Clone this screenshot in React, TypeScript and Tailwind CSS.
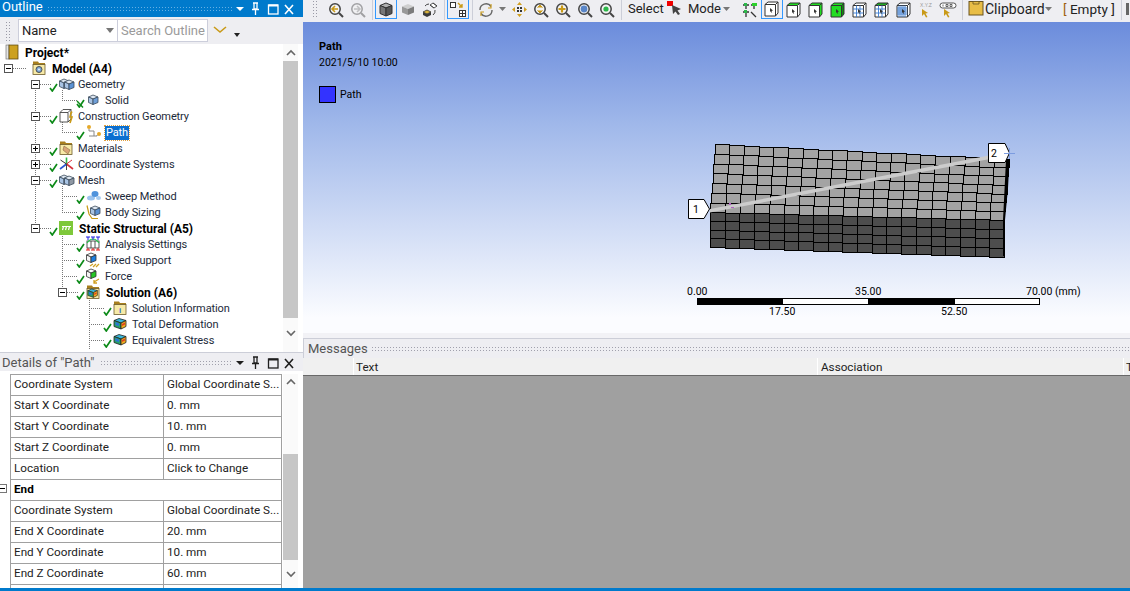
import React from "react";

const FONT = "font-['Roboto','Liberation_Sans',Arial,sans-serif]";

function Svg({ s = 16, children }: { s?: number; children: React.ReactNode }) {
  return (
    <svg width={s} height={s} viewBox={`0 0 ${s} ${s}`} className="block shrink-0">
      {children}
    </svg>
  );
}

// ---- tree icons ----
function Cube({ x = 0, y = 0, c = "#6f9fd8" }: { x?: number; y?: number; c?: string }) {
  return (
    <g transform={`translate(${x} ${y})`} stroke="#3a4a5a" strokeWidth="0.8" strokeLinejoin="round">
      <path d="M5 1 L10 3 L5 5 L0.5 3 Z" fill="#dfe8f2" />
      <path d="M0.5 3 L5 5 V10.5 L0.5 8.5 Z" fill="#a9c4e4" />
      <path d="M5 5 L10 3 V8.5 L5 10.5 Z" fill={c} />
    </g>
  );
}

function Folder({ children }: { children?: React.ReactNode }) {
  return (
    <>
      <path d="M1 1.5 H6 L7 3 H13 V5 H1 Z" fill="#a87f1e" />
      <rect x="1" y="4.5" width="12" height="10" fill="#f7eaa8" stroke="#6b5a2a" strokeWidth="0.8" />
      {children}
    </>
  );
}

function Rainbow() {
  return (
    <g transform="translate(0 2)" stroke="#222" strokeWidth="0.8">
      <path d="M6 0.5 L13 2.5 L8 5 L1 2.5 Z" fill="#39b7d8" />
      <path d="M1 2.5 L8 5 V11 L1 8.5 Z" fill="#27a06a" />
      <path d="M8 5 L13 2.5 V8.5 L8 11 Z" fill="#f0b020" />
      <path d="M2.5 4 L6 5.5 V8 L2.5 7 Z" fill="#2c72d8" stroke="none" />
      <path d="M9 6 L12 4.5 V6.5 L9 8 Z" fill="#e04020" stroke="none" />
    </g>
  );
}

const treeIcons: Record<string, React.ReactNode> = {
  project: (
    <>
      <rect x="1" y="1" width="3" height="14" fill="#e4e4e4" stroke="#777" strokeWidth="0.7" />
      <rect x="4" y="1" width="9" height="14" fill="#cda11f" stroke="#5c4a14" strokeWidth="0.8" />
    </>
  ),
  model: (
    <Folder>
      <circle cx="7" cy="9.5" r="3" fill="#7aa6d6" stroke="#444" strokeWidth="0.9" />
      <circle cx="7" cy="9.5" r="1" fill="#e8eef6" />
    </Folder>
  ),
  geometry: (
    <>
      <Cube x={0} y={2} c="#7fa8d8" />
      <Cube x={5} y={3} c="#5b92d4" />
    </>
  ),
  solid: <Cube x={2} y={2} />,
  construction: (
    <>
      <path d="M1 4.5 L4 1.5 H12 V11 L9 14 H1 Z M1 4.5 H9 V14 M9 4.5 L12 1.5" fill="#fff" stroke="#444" strokeWidth="0.9" />
      <path d="M12 5 L11 9 L13 9 L11 15 M13 3.5 L11.5 6" stroke="#c99a18" strokeWidth="1.6" fill="none" />
    </>
  ),
  path: (
    <>
      <circle cx="3" cy="3" r="2" fill="#e5a92a" />
      <circle cx="13" cy="10" r="2" fill="#e5a92a" />
      <path d="M3 5 V7 H8 V12 H3 M8 12 H11 V11" fill="none" stroke="#888" strokeWidth="1" />
    </>
  ),
  materials: (
    <Folder>
      <path d="M5 6 L11 10 L9 14 L4 10 Z" fill="#d9a679" stroke="#8a6a44" strokeWidth="0.6" />
    </Folder>
  ),
  coords: (
    <>
      <path d="M7.5 8 V1.5" stroke="#2fb84a" strokeWidth="1.6" />
      <path d="M7.5 8 L14 13" stroke="#d8323c" strokeWidth="1.6" />
      <path d="M7.5 8 L1 13" stroke="#2a55d0" strokeWidth="1.6" />
      <path d="M7.5 8 L1.5 4" stroke="#333" strokeWidth="1" />
      <path d="M7.5 8 L13 4" stroke="#d8323c" strokeWidth="1" />
      <path d="M7.5 8 V14" stroke="#444" strokeWidth="1" />
    </>
  ),
  mesh: (
    <>
      <Cube x={0} y={2} c="#a8b0ba" />
      <Cube x={5} y={3} c="#8f98a3" />
    </>
  ),
  sweep: (
    <>
      <ellipse cx="5" cy="10" rx="4" ry="2.5" fill="#9cc4ee" />
      <ellipse cx="9" cy="6" rx="3.5" ry="3" fill="#4f93dc" />
      <ellipse cx="12.5" cy="10" rx="2.5" ry="2" fill="#a8ccf0" />
    </>
  ),
  sizing: (
    <>
      <path d="M1 1.5 L3 10 L6 14.5 H12" fill="none" stroke="#c99a18" strokeWidth="1.2" />
      <Cube x={4} y={1} c="#5b92d4" />
    </>
  ),
  structural: (
    <>
      <rect x="0" y="1" width="14" height="14" fill="#7ec83a" />
      <path d="M3 6.5 H12 M4.5 6.5 L3.5 10 M7.5 6.5 L6.5 10 M10.5 6.5 L9.5 10" stroke="#fff" strokeWidth="1.2" fill="none" />
    </>
  ),
  analysis: (
    <>
      <rect x="1" y="5" width="12" height="7" fill="#fff" stroke="#444" strokeWidth="0.9" />
      <path d="M5 5 V12 M9 5 V12" stroke="#444" strokeWidth="0.9" />
      <path d="M1 7 Q7 -1 13 7" fill="none" stroke="#22c84a" strokeWidth="1.1" />
      <path d="M0 1 H4 M2 1 V4 M5 1 H9 M7 1 V4 M10 1 H14 M12 1 V4" stroke="#1a1ae0" strokeWidth="1" />
      <path d="M0 14 H4 M2 12 V14 M5 14 H9 M7 12 V14 M10 14 H14 M12 12 V14" stroke="#e01a1a" strokeWidth="1" />
    </>
  ),
  fixed: (
    <>
      <g stroke="#333" strokeWidth="0.8">
        <path d="M5 1 L10 3 L5 5 L0.5 3 Z" fill="#fff" />
        <path d="M0.5 3 L5 5 V10.5 L0.5 8.5 Z" fill="#f4f4f4" />
        <path d="M5 5 L10 3 V8.5 L5 10.5 Z" fill="#1c7ee0" />
      </g>
      <path d="M7 15 L10 12 M10 15 L13 12 M4 14 L7 12" stroke="#d0a020" strokeWidth="1.2" />
    </>
  ),
  force: (
    <>
      <g stroke="#333" strokeWidth="0.8">
        <path d="M5 1 L10 3 L5 5 L0.5 3 Z" fill="#fff" />
        <path d="M0.5 3 L5 5 V10.5 L0.5 8.5 Z" fill="#f4f4f4" />
        <path d="M5 5 L10 3 V8.5 L5 10.5 Z" fill="#25c825" />
      </g>
      <path d="M13 11 L8 14 M8 12 V15 H11" stroke="#d0a020" strokeWidth="1.3" fill="none" />
    </>
  ),
  solution: (
    <Folder>
      <g transform="translate(1 3) scale(0.8)">
        <Rainbow />
      </g>
    </Folder>
  ),
  info: (
    <Folder>
      <text x="7" y="13" textAnchor="middle" fontSize="8" fontWeight="700" fill="#2a6ad0" fontFamily="Liberation Sans">
        i
      </text>
    </Folder>
  ),
  rainbow: <Rainbow />,
};

function Check({ crossed }: { crossed?: boolean }) {
  return (
    <svg width="9" height="9" viewBox="0 0 9 9" className="absolute left-[-10px] top-[7px]">
      <path d="M1 5 L3.3 8 L8 1" fill="none" stroke="#0c8a18" strokeWidth="1.7" />
      {crossed && <path d="M1 2 L7 8.5" stroke="#0c8a18" strokeWidth="1.4" />}
    </svg>
  );
}

function Expander({ open }: { open: boolean }) {
  return (
    <span className="absolute left-[-28px] top-[4px] w-[9px] h-[9px] border border-[#555] bg-white flex items-center justify-center">
      <span className="absolute w-[5px] h-px bg-black" />
      {!open && <span className="absolute h-[5px] w-px bg-black" />}
    </span>
  );
}

type Node = {
  label: string;
  level: number;
  icon: string;
  bold?: boolean;
  exp?: "open" | "closed";
  noCheck?: boolean;
  crossed?: boolean;
  selected?: boolean;
};

const nodes: Node[] = [
  { label: "Project*", level: 0, icon: "project", bold: true, noCheck: true },
  { label: "Model (A4)", level: 1, icon: "model", bold: true, exp: "open", noCheck: true },
  { label: "Geometry", level: 2, icon: "geometry", exp: "open" },
  { label: "Solid", level: 3, icon: "solid", crossed: true },
  { label: "Construction Geometry", level: 2, icon: "construction", exp: "open" },
  { label: "Path", level: 3, icon: "path", selected: true },
  { label: "Materials", level: 2, icon: "materials", exp: "closed" },
  { label: "Coordinate Systems", level: 2, icon: "coords", exp: "closed" },
  { label: "Mesh", level: 2, icon: "mesh", exp: "open" },
  { label: "Sweep Method", level: 3, icon: "sweep" },
  { label: "Body Sizing", level: 3, icon: "sizing" },
  { label: "Static Structural (A5)", level: 2, icon: "structural", bold: true, exp: "open" },
  { label: "Analysis Settings", level: 3, icon: "analysis" },
  { label: "Fixed Support", level: 3, icon: "fixed" },
  { label: "Force", level: 3, icon: "force" },
  { label: "Solution (A6)", level: 3, icon: "solution", bold: true, exp: "open" },
  { label: "Solution Information", level: 4, icon: "info" },
  { label: "Total Deformation", level: 4, icon: "rainbow" },
  { label: "Equivalent Stress", level: 4, icon: "rainbow" },
];

const indent = ["ml-[5px]", "ml-[32px]", "ml-[59px]", "ml-[86px]", "ml-[113px]"];

function TreeLines() {
  // dotted connectors of the tree, y is relative to the tree's top (44)
  const rowY = (i: number) => 8 + i * 16;
  const v: [number, number, number][] = [
    [35, rowY(2), rowY(11)],
    [62, rowY(2) + 6, rowY(3)],
    [62, rowY(4) + 6, rowY(5)],
    [62, rowY(8) + 6, rowY(10)],
    [62, rowY(11) + 6, rowY(15)],
    [89, rowY(15) + 6, 306],
  ];
  const h: [number, number, number][] = [
    [13, 26, rowY(1)],
    [40, 52, rowY(2)],
    [62, 77, rowY(3)],
    [40, 52, rowY(4)],
    [62, 77, rowY(5)],
    [40, 52, rowY(6)],
    [40, 52, rowY(7)],
    [40, 52, rowY(8)],
    [62, 77, rowY(9)],
    [62, 77, rowY(10)],
    [40, 52, rowY(11)],
    [62, 77, rowY(12)],
    [62, 77, rowY(13)],
    [62, 77, rowY(14)],
    [67, 79, rowY(15)],
    [89, 104, rowY(16)],
    [89, 104, rowY(17)],
    [89, 104, rowY(18)],
  ];
  return (
    <svg width="130" height="306" className="absolute left-0 top-0">
      <g stroke="#777" strokeWidth="1" strokeDasharray="1 1" shapeRendering="crispEdges">
        {v.map(([x, a, b], i) => (
          <line key={i} x1={x + 0.5} x2={x + 0.5} y1={a} y2={b} />
        ))}
        {h.map(([a, b, y], i) => (
          <line key={i} x1={a} x2={b} y1={y + 0.5} y2={y + 0.5} />
        ))}
      </g>
    </svg>
  );
}

function TreeRow({ n }: { n: Node }) {
  return (
    <div className="flex items-center h-4 relative">
      <div className={`relative w-[20px] h-4 shrink-0 ${indent[n.level]}`}>
        {treeIcons[n.icon] && <Svg>{treeIcons[n.icon]}</Svg>}
        {!n.noCheck && <Check crossed={n.crossed} />}
        {n.exp && <Expander open={n.exp === "open"} />}
      </div>
      <span
        className={`leading-[14px] mt-px whitespace-nowrap ${
          n.bold ? "text-[12px] font-bold text-black" : "text-[11px] tracking-[-0.12px] -ml-px text-[#1c2a3a]"
        } ${n.selected ? "bg-[#0a6fd0] text-white px-px outline-1 outline-dotted outline-[#e0a040]" : ""}`}
      >
        {n.label}
      </span>
    </div>
  );
}

// ---- panel pieces ----
function PanelButtons({ color }: { color: string }) {
  return (
    <svg width="62" height="14" viewBox="0 0 62 14" className="shrink-0">
      <path d="M1 5 H9 L5 9 Z" fill={color} />
      <path d="M18 1 H23 M19 1 V7 H22 V1 M17 7.5 H24 M20.5 8 V13" stroke={color} strokeWidth="1.3" fill="none" />
      <rect x="33.5" y="3" width="9.5" height="9" fill="none" stroke={color} strokeWidth="1.3" />
      <path d="M33.5 3.5 H43" stroke={color} strokeWidth="2" />
      <path d="M50 3 L58 12 M58 3 L50 12" stroke={color} strokeWidth="1.6" />
    </svg>
  );
}

function ScrollArrow({ up }: { up?: boolean }) {
  return (
    <svg width="10" height="8" viewBox="0 0 10 8" className="block">
      <path d={up ? "M1 6 L5 2 L9 6" : "M1 2 L5 6 L9 2"} fill="none" stroke="#666" strokeWidth="1.6" />
    </svg>
  );
}

const details: { a: string; b?: string; bold?: boolean }[] = [
  { a: "Coordinate System", b: "Global Coordinate S..." },
  { a: "Start X Coordinate", b: "0. mm" },
  { a: "Start Y Coordinate", b: "10. mm" },
  { a: "Start Z Coordinate", b: "0. mm" },
  { a: "Location", b: "Click to Change" },
  { a: "End", bold: true },
  { a: "Coordinate System", b: "Global Coordinate S..." },
  { a: "End X Coordinate", b: "20. mm" },
  { a: "End Y Coordinate", b: "10. mm" },
  { a: "End Z Coordinate", b: "60. mm" },
  { a: "", b: "" },
];

function LeftPanel() {
  return (
    <div className="w-[303px] shrink-0 flex flex-col bg-white">
      <div className="h-[17px] bg-[#007acc] flex items-center pl-[2px] pr-[6px]">
        <span className="text-[13px] leading-[14px] text-white w-[45px] mb-[3px]">Outline</span>
        <div className="flex-1 mr-[3px] h-[6px] bg-[radial-gradient(#66b0e4_0.7px,transparent_0.8px)] bg-[length:3px_3px]" />
        <PanelButtons color="#ffffff" />
      </div>
      <div className="h-[27px] bg-[#eeeef2] flex items-center pl-[5px]">
        <div className="w-[7px] h-[20px] bg-[radial-gradient(#9a9aa6_0.7px,transparent_0.8px)] bg-[length:3px_3px] mr-[6px]" />
        <div className="w-[100px] h-[23px] bg-white border border-[#cccedb] flex items-center justify-between pl-[3px] pr-[3px] text-[13px] text-[#222]">
          Name
          <svg width="8" height="5" viewBox="0 0 8 5">
            <path d="M0 0 H8 L4 5 Z" fill="#777" />
          </svg>
        </div>
        <div className="w-[90px] h-[23px] bg-white border border-[#cccedb] border-l-0 flex items-center pl-[3px] text-[13px] text-[#9a9a9a] overflow-hidden whitespace-nowrap">
          Search Outline
        </div>
        <svg width="14" height="8" viewBox="0 0 14 8" className="ml-[5px] mb-[2px]">
          <path d="M1 1 L7 6 L13 1" fill="none" stroke="#c99a18" strokeWidth="1.6" />
        </svg>
        <svg width="6" height="4" viewBox="0 0 6 4" className="ml-[7px] mt-[9px]">
          <path d="M0 0 H6 L3 4 Z" fill="#222" />
        </svg>
      </div>
      <div className="h-[308px] flex relative overflow-hidden">
        <TreeLines />
        <div className="w-[283px] relative overflow-hidden">
          {nodes.map((n) => (
            <TreeRow key={n.label} n={n} />
          ))}
        </div>
        <div className="w-[15px] flex flex-col items-center bg-[#fafafa]">
          <div className="h-[17px] flex items-center">
            <ScrollArrow up />
          </div>
          <div className="w-full h-[257px] bg-[#c6c6c6]" />
          <div className="flex-1 flex items-center pb-[4px]">
            <ScrollArrow />
          </div>
        </div>
      </div>
      <div className="h-[19px] bg-[#eeeef2] border-t border-[#ccced8] flex items-center pl-[2px] pr-[6px] pt-[2px]">
        <span className="text-[13px] leading-[14px] text-[#555] w-[98px] whitespace-nowrap">Details of "Path"</span>
        <div className="flex-1 mr-[3px] h-[6px] bg-[radial-gradient(#a0a0ac_0.7px,transparent_0.8px)] bg-[length:3px_3px]" />
        <PanelButtons color="#1e1e1e" />
      </div>
      <div className="h-[217px] flex overflow-hidden pt-[3px] relative">
        <div className="w-[10px] shrink-0 relative">
          <span className="absolute left-[-3px] top-[110px] w-[10px] h-[9px] border border-[#777] bg-white flex items-center justify-center">
            <span className="w-[5px] h-px bg-black" />
          </span>
        </div>
        <div className="w-[272px] shrink-0 border-t border-x border-[#a0a0a0]">
          {details.map((d, i) => (
            <div key={i} className="flex h-[21px] border-b border-[#a0a0a0] text-[11.7px] text-[#222] items-center">
              {d.bold ? (
                <span className="pl-[3px] font-bold text-black">{d.a}</span>
              ) : (
                <>
                  <span className="w-[153px] shrink-0 pl-[3px] h-full flex items-center border-r border-[#a0a0a0] whitespace-nowrap">{d.a}</span>
                  <span className="pl-[3px] whitespace-nowrap">{d.b}</span>
                </>
              )}
            </div>
          ))}
        </div>
        <div className="ml-px w-[15px] flex flex-col items-center bg-[#fafafa]">
          <div className="h-[16px] flex items-center">
            <ScrollArrow up />
          </div>
          <div className="mt-[64px] w-full h-[106px] bg-[#c6c6c6]" />
          <div className="flex-1 flex items-center">
            <ScrollArrow />
          </div>
        </div>
      </div>
    </div>
  );
}

// ---- toolbar ----
function Magnifier({ inner, faded }: { inner: React.ReactNode; faded?: boolean }) {
  return (
    <svg width="16" height="16" viewBox="0 0 16 16" opacity={faded ? 0.45 : 1}>
      <circle cx="7" cy="7" r="5.2" fill="#f4f4f4" stroke="#444" strokeWidth="1.5" />
      <path d="M11 11 L15 15" stroke="#444" strokeWidth="2" />
      {inner}
    </svg>
  );
}

const goldArrow = <path d="M10 7 H4 M7 4 L4 7 L7 10" fill="none" stroke="#c99a18" strokeWidth="1.6" />;

function Btn({ children, active, w = "w-[22px]" }: { children: React.ReactNode; active?: boolean; w?: string }) {
  return (
    <div className={`${w} h-[19px] shrink-0 flex items-center justify-center ${active ? "border border-t-0 border-[#3399ff]" : ""}`}>
      {children}
    </div>
  );
}

function Sep() {
  return (
    <div className="w-[6px] shrink-0 flex justify-center">
      <div className="w-px h-[20px] bg-[#ccced8]" />
    </div>
  );
}

function SelCube({ top = "#fff", front = "#fff", right = "#fff", grid }: { top?: string; front?: string; right?: string; grid?: string }) {
  return (
    <svg width="16" height="16" viewBox="0 0 16 16">
      <path d="M1 3.5 L4 1 H14 L11.5 3.5 Z" fill={top} stroke="#333" />
      <path d="M1 3.5 H11.5 V15 H1 Z" fill={front} stroke="#333" />
      <path d="M11.5 3.5 L14 1 V12 L11.5 15 Z" fill={right} stroke="#333" />
      {grid && <path d={grid} stroke="#3a7ad0" strokeWidth="0.9" fill="none" />}
      <path d="M6 7 L9 9.5 L7.5 10 L8.2 11.5 L7.5 11.8 L6.8 10.3 L6 11 Z" fill="#333" />
    </svg>
  );
}

function Toolbar() {
  return (
    <div className="h-[22px] bg-[#eeeef2] flex items-start overflow-hidden whitespace-nowrap text-[13px] leading-[18px] text-[#222]">
      <div className="w-[22px] shrink-0 flex justify-center">
        <div className="w-[5px] h-[18px] bg-[radial-gradient(#9a9aa6_0.7px,transparent_0.8px)] bg-[length:3px_3px]" />
      </div>
      <Btn>
        <Magnifier inner={goldArrow} />
      </Btn>
      <Btn>
        <Magnifier faded inner={<path d="M4 7 H10 M7 4 L10 7 L7 10" fill="none" stroke="#888" strokeWidth="1.5" />} />
      </Btn>
      <Sep />
      <Btn active>
        <svg width="14" height="15" viewBox="0 0 14 15">
          <path d="M7 1 L13 3.5 L7 6 L1 3.5 Z" fill="#b0b0b0" stroke="#333" />
          <path d="M1 3.5 L7 6 V14 L1 11.5 Z" fill="#777" stroke="#333" />
          <path d="M7 6 L13 3.5 V11.5 L7 14 Z" fill="#555" stroke="#333" />
        </svg>
      </Btn>
      <Btn>
        <svg width="14" height="15" viewBox="0 0 14 15">
          <path d="M7 2 L13 4.5 L7 7 L1 4.5 Z" fill="#cfcfcf" />
          <path d="M1 4.5 L7 7 V13 L1 10.5 Z" fill="#999" />
          <path d="M7 7 L13 4.5 V10.5 L7 13 Z" fill="#7c7c7c" />
        </svg>
      </Btn>
      <Btn>
        <svg width="16" height="16" viewBox="0 0 16 16">
          <path d="M8 3 L11 1 L15 4 L12 6 Z M8 3 L12 6 M11 1 L15 4" fill="#fff" stroke="#444" strokeWidth="0.9" />
          <path d="M1 10 L5 8 L9 10 L5 12 Z" fill="#d9b23a" stroke="#333" strokeWidth="0.8" />
          <path d="M1 10 L5 12 V15 L1 13 Z M5 12 L9 10 V13 L5 15 Z" fill="#3a3a3a" />
          <path d="M3 4 A5 5 0 0 1 7 2 M13 8 A5 5 0 0 1 11 13" fill="none" stroke="#444" strokeWidth="1" />
        </svg>
      </Btn>
      <Sep />
      <Btn active>
        <svg width="18" height="17" viewBox="0 0 18 17">
          <rect x="1.5" y="1.5" width="5" height="5" fill="#fff" stroke="#333" />
          <rect x="10.5" y="9.5" width="6" height="6" fill="#fff" stroke="#333" />
          <path d="M13.5 9.5 V15.5 M10.5 12.5 H16.5" stroke="#333" />
          <path d="M9 2 L13 6 M13 3 V6 H10" fill="none" stroke="#c99a18" strokeWidth="1.4" />
        </svg>
      </Btn>
      <Sep />
      <Btn>
        <svg width="16" height="16" viewBox="0 0 16 16">
          <path d="M2 8 A6 6 0 0 1 13 4.5" fill="none" stroke="#666" strokeWidth="1.4" />
          <path d="M14 8 A6 6 0 0 1 3 11.5" fill="none" stroke="#666" strokeWidth="1.4" />
          <path d="M13 2 V6 H10 M3 14 V10 H6" fill="none" stroke="#c99a18" strokeWidth="1.1" />
        </svg>
      </Btn>
      <div className="w-[11px] h-[18px] shrink-0 flex justify-center items-center">
        <svg width="7" height="4" viewBox="0 0 7 4">
          <path d="M0 0 H7 L3.5 4 Z" fill="#777" />
        </svg>
      </div>
      <Btn>
        <svg width="15" height="15" viewBox="0 0 15 15">
          <path d="M7.5 0 L10 3 H5 Z M7.5 15 L5 12 H10 Z M0 7.5 L3 5 V10 Z M15 7.5 L12 10 V5 Z" fill="#d2a020" />
          <rect x="5" y="5" width="2" height="2" fill="#333" />
          <rect x="8" y="5" width="2" height="2" fill="#333" />
          <rect x="5" y="8" width="2" height="2" fill="#333" />
          <rect x="8" y="8" width="2" height="2" fill="#333" />
        </svg>
      </Btn>
      <Btn>
        <Magnifier inner={<path d="M4.5 5.5 L7 3 L9.5 5.5 M4.5 8.5 L7 11 L9.5 8.5" fill="#c99a18" stroke="#c99a18" strokeWidth="1" />} />
      </Btn>
      <Btn>
        <Magnifier inner={<path d="M3.5 7 H10.5 M7 3.5 V10.5" stroke="#c99a18" strokeWidth="2.2" />} />
      </Btn>
      <Btn>
        <Magnifier inner={<circle cx="7" cy="7" r="3.4" fill="#5a86c8" />} />
      </Btn>
      <Btn>
        <Magnifier inner={<circle cx="7" cy="7" r="2.6" fill="#2cb84a" />} />
      </Btn>
      <Sep />
      <span className="ml-[4px] w-[38px] text-[#222]">Select</span>
      <svg width="18" height="16" viewBox="0 0 18 16" className="shrink-0 mr-[2px]">
        <rect x="1" y="1" width="6" height="5" fill="#f00000" />
        <path d="M6 5 L15 9 L11.5 10.5 L14 14 L12 15 L9.5 11.5 L7 14 Z" fill="#444" />
      </svg>
      <span className="w-[35px] ml-[2px]">Mode</span>
      <div className="h-[18px] flex items-center mr-[9px]">
        <svg width="7" height="4" viewBox="0 0 7 4" className="shrink-0">
          <path d="M0 0 H7 L3.5 4 Z" fill="#777" />
        </svg>
      </div>
      <Btn>
        <svg width="16" height="16" viewBox="0 0 16 16">
          <path d="M1 3 H7 M4 3 V7 M9 3 H15 M12 3 V7 M1 10 H7 M4 10 V15 M9 10 L14 15" stroke="#333" strokeWidth="1.3" />
          <rect x="2" y="1" width="3" height="3" fill="#2cb84a" />
          <rect x="10" y="1" width="5" height="3" fill="#2cd02c" />
          <rect x="2" y="8" width="3" height="3" fill="#2cb84a" />
        </svg>
      </Btn>
      <Btn active>
        <SelCube />
      </Btn>
      <Btn>
        <SelCube top="#22dd22" />
      </Btn>
      <Btn>
        <SelCube top="#22dd22" right="#22dd22" />
      </Btn>
      <Btn>
        <SelCube top="#22dd22" front="#22dd22" right="#118811" />
      </Btn>
      <Btn>
        <SelCube grid="M4.5 3.5 V15 M8 3.5 V15 M1 7 H11.5 M1 11 H11.5" />
      </Btn>
      <Btn>
        <SelCube top="#22aa22" grid="M4.5 3.5 V15 M8 3.5 V15 M1 7 H11.5 M1 11 H11.5" />
      </Btn>
      <Btn>
        <SelCube grid="M3 3.5 V15 M5 3.5 V15 M7 3.5 V15 M9 3.5 V15 M1 6 H11.5 M1 8 H11.5 M1 10 H11.5 M1 12 H11.5" />
      </Btn>
      <Btn>
        <svg width="18" height="16" viewBox="0 0 18 16">
          <text x="9" y="5" textAnchor="middle" fontSize="5" fill="#999" fontFamily="Liberation Sans">
            X.Y.Z
          </text>
          <path d="M5 7 L11 11 L8.5 11.5 L10.5 15 L9 15.5 L7 12 L5 14 Z" fill="#c99a18" />
        </svg>
      </Btn>
      <Btn>
        <svg width="18" height="16" viewBox="0 0 18 16">
          <rect x="1" y="1" width="16" height="5" rx="2.5" fill="#fff" stroke="#555" />
          <path d="M4 2.5 V4.5 M7 2.5 H9 V4.5 H7 Z M11 2.5 H13 V4.5 H11 Z" stroke="#444" fill="none" strokeWidth="0.8" />
          <path d="M5 7 L11 11 L8.5 11.5 L10.5 15 L9 15.5 L7 12 L5 14 Z" fill="#c99a18" />
        </svg>
      </Btn>
      <Sep />
      <svg width="16" height="16" viewBox="0 0 16 16" className="shrink-0 ml-[3px]">
        <rect x="1" y="1.5" width="14" height="13.5" fill="#e8bd46" stroke="#6a5520" />
        <path d="M5 1.5 H11 V4 H5 Z" fill="#e8bd46" stroke="#6a5520" strokeWidth="0.8" />
      </svg>
      <span className="ml-px w-[60px] text-[14px]">Clipboard</span>
      <div className="h-[18px] flex items-center mr-[11px]">
        <svg width="7" height="4" viewBox="0 0 7 4" className="shrink-0">
          <path d="M0 0 H7 L3.5 4 Z" fill="#777" />
        </svg>
      </div>
      <span className="w-[55px] text-[13.5px]">
        <span className="text-[#a06010]">[</span> Empty <span className="text-[#222]">]</span>
      </span>
      <Sep />
      <div className="w-[3px] h-[12px] mt-[3px] ml-[2px] bg-[#666]" />
    </div>
  );
}

// ---- graphics ----
const mix = (a: number, b: number, t: number) => a + (b - a) * t;

function Mesh() {
  const COLS = 20;

  // every element is drawn as a rectangle on the pixel grid, that is what gives the stepped look
  const cells = (a: number[], b: number[], c: number[], d: number[], rows: number, fill: string) => {
    const out: React.ReactNode[] = [];
    for (let r = 0; r < rows; r++) {
      for (let i = 0; i < COLS; i++) {
        const um = (i + 0.5) / COLS;
        const vm = (r + 0.5) / rows;
        const xAt = (u: number) => mix(mix(a[0], b[0], u), mix(c[0], d[0], u), vm);
        const yAt = (v: number) => mix(mix(a[1], c[1], v), mix(b[1], d[1], v), um);
        const x0 = Math.round(xAt(i / COLS));
        const x1 = Math.round(xAt((i + 1) / COLS));
        const y0 = Math.round(yAt(r / rows));
        const y1 = Math.round(yAt((r + 1) / rows));
        out.push(
          <rect
            key={`${fill}${r}-${i}`}
            x={x0 + 0.5}
            y={y0 + 0.5}
            width={x1 - x0}
            height={y1 - y0}
            fill={fill}
            stroke="#000"
            strokeWidth="1"
            shapeRendering="crispEdges"
          />
        );
      }
    }
    return out;
  };

  return (
    <g transform="translate(-303 -22)">
      {cells([715, 144], [1009, 159], [710, 212], [1004, 220], 7, "#a3a3a3")}
      {cells([710, 212], [1004, 220], [710, 247], [1004, 257], 4, "#4d4d4d")}
      <polygon points="1006,160 1009.5,159 1008,188 1005,220 1004.5,256 1003,256 1003,220" fill="#000" />
      <polygon points="710,209 989,155.5 990,159 710,212.5" fill="#cccccc" />
      <rect x="729" y="203" width="2" height="2" fill="#b060c0" />
      <rect x="731" y="207" width="3" height="1" fill="#b060c0" />
      <path d="M688.5 199.5 H704 L709.5 209 L704 218.5 H688.5 Z" fill="#fff" stroke="#000" />
      <path d="M988.5 143.5 H1005 L1009.5 153 L1005 162.5 H988.5 Z" fill="#fff" stroke="#000" />
      <path d="M1004 153.5 H1015 M1009.5 148 V159" stroke="#7c9ce0" strokeWidth="1" />
      <g fontFamily="Roboto, sans-serif" fontSize="10.5" fill="#000">
        <text x="693" y="213">1</text>
        <text x="991" y="157">2</text>
        <text x="687" y="295">0.00</text>
        <text x="855" y="295">35.00</text>
        <text x="1026" y="295">70.00 (mm)</text>
        <text x="769" y="315">17.50</text>
        <text x="941" y="315">52.50</text>
      </g>
      <rect x="697.5" y="298.5" width="342" height="6" fill="#fff" stroke="#000" />
      <rect x="697" y="298" width="86" height="7" fill="#000" />
      <rect x="868" y="298" width="87" height="7" fill="#000" />
    </g>
  );
}

function Viewport() {
  return (
    <div className="h-[311px] relative overflow-hidden bg-[linear-gradient(#6b8cdc,#a0b8ea_33%,#fbfcff_95%)] pl-[16px] pt-[17px] text-[10.5px] leading-[16px] text-black">
      <div className="font-bold text-[11px]">Path</div>
      <div>2021/5/10 10:00</div>
      <div className="flex items-center mt-[15px]">
        <div className="w-[17px] h-[17px] bg-[#3333ff] border border-black" />
        <span className="ml-[4px]">Path</span>
      </div>
      <svg width="827" height="311" className="absolute left-0 top-0">
        <Mesh />
      </svg>
    </div>
  );
}

function Messages() {
  return (
    <div className="flex-1 flex flex-col">
      <div className="h-[5px] bg-[#f2f2f6]" />
      <div className="h-[20px] bg-[#eeeef2] border-t border-l border-[#ccced8] flex items-center pl-[4px]">
        <span className="text-[13px] text-[#555] mr-[3px]">Messages</span>
        <div className="flex-1 h-[6px] bg-[radial-gradient(#a0a0ac_0.7px,transparent_0.8px)] bg-[length:3px_3px]" />
      </div>
      <div className="h-[18px] bg-[#f0f0f0] flex border-b border-[#696969] text-[11.7px] leading-[19px] text-[#222]">
        <div className="w-[50px] shrink-0" />
        <div className="w-[464px] shrink-0 border-l border-white pl-[2px]">Text</div>
        <div className="w-[306px] shrink-0 border-l border-white pl-[3px]">Association</div>
        <div className="flex-1 border-l border-white pl-[2px]">T</div>
      </div>
      <div className="flex-1 bg-[#a0a0a0]" />
    </div>
  );
}

export default function App() {
  return (
    <div className={`w-[1130px] h-[591px] flex flex-col overflow-hidden bg-[#eeeef2] ${FONT}`}>
      <div className="h-[588px] flex">
        <LeftPanel />
        <div className="flex-1 flex flex-col min-w-0">
          <Toolbar />
          <Viewport />
          <Messages />
        </div>
      </div>
      <div className="h-[3px] bg-[#007acc]" />
    </div>
  );
}
